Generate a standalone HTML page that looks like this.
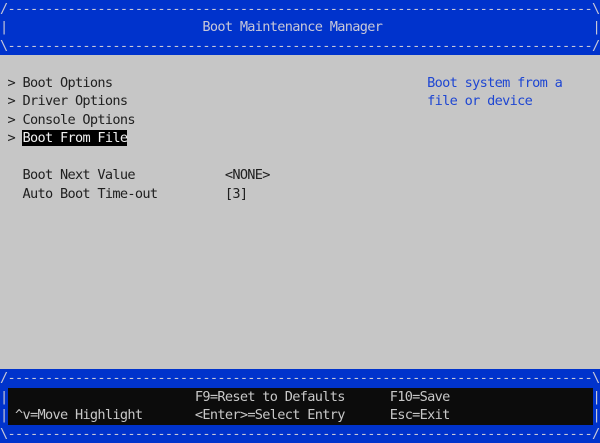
<!DOCTYPE html>
<html><head><meta charset="utf-8"><style>
html,body{margin:0;padding:0;background:#c6c6c6;width:600px;height:443px;overflow:hidden}
.r{position:absolute;left:0;width:600px;height:18.46px;line-height:18.46px;white-space:pre;font-family:"DejaVu Sans Mono","Liberation Mono",monospace;font-size:13.6px;letter-spacing:-0.69px;color:#202020}
.b{background:#0033cc;color:#c8c8d8}
.blue{color:#1e46d2}
.sel{background:#000;color:#f0f0f0}
.bar{color:#c8c8d8}
.rb{position:absolute;left:592.5px}
</style></head><body>
<div class="r b" style="top:0;height:55.4px"></div>
<div class="r" style="top:0;height:2px;background:#c6c6c6"></div>
<div class="r b" style="top:0">/------------------------------------------------------------------------------\</div>
<div class="r b" style="top:18.46px">|                          Boot Maintenance Manager                            <span class="rb">|</span></div>
<div class="r b" style="top:36.92px">\------------------------------------------------------------------------------/</div>
<div class="r" style="top:73.84px"> &gt; Boot Options                                          <span class="blue">Boot system from a</span></div>
<div class="r" style="top:92.3px"> &gt; Driver Options                                        <span class="blue">file or device</span></div>
<div class="r" style="top:110.76px"> &gt; Console Options</div>
<div class="r" style="top:129.22px"> &gt; <span class="sel">Boot From File</span></div>
<div class="r" style="top:166.14px">   Boot Next Value            &lt;NONE&gt;</div>
<div class="r" style="top:184.6px">   Auto Boot Time-out         [3]</div>
<div class="r b" style="top:369.2px;height:73.8px"></div>
<div class="r b" style="top:369.2px">/------------------------------------------------------------------------------\</div>
<div class="r" style="top:387.66px;left:7.5px;width:585px;background:#0c0c0c"></div>
<div class="r" style="top:406.12px;left:7.5px;width:585px;background:#0c0c0c"></div>
<div class="r" style="top:387.66px;color:#c8c8c8"><span class="bar">|</span>                         F9=Reset to Defaults      F10=Save<span class="rb bar">|</span></div>
<div class="r" style="top:406.12px;color:#c8c8c8"><span class="bar">|</span> ^v=Move Highlight       &lt;Enter&gt;=Select Entry      Esc=Exit<span class="rb bar">|</span></div>
<div class="r b" style="top:424.58px">\------------------------------------------------------------------------------/</div>
</body></html>
